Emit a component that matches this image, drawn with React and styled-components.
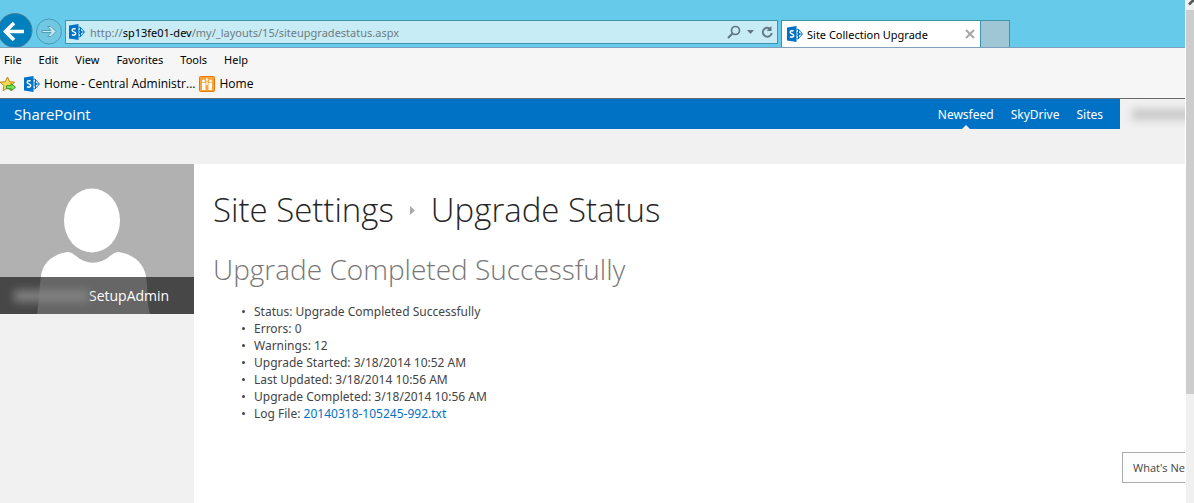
import React from "react";
import styled, { createGlobalStyle } from "styled-components";

const GlobalStyle = createGlobalStyle`
  *, *::before, *::after { box-sizing: border-box; }
  html, body { margin: 0; }
  body {
    font-family: "Noto Sans", "Open Sans", sans-serif;
    font-size: 12px;
    color: #444;
    background: #fff;
    overflow: hidden;
  }
  a { text-decoration: none; color: inherit; }
  button { font: inherit; color: inherit; background: none; border: 0; padding: 0; }
  svg { display: block; flex: none; }
`;

const Window = styled.div`
  display: flex;
  min-height: 100vh;
`;
const Viewport = styled.div`
  flex: 1;
  min-width: 0;
  display: flex;
  flex-direction: column;
  overflow: hidden;
`;
const ScrollTrack = styled.div`
  width: 9px;
  flex: none;
  background: #f0f0f0;
  border-left: 1px solid #fff;
  overflow: hidden;
`;
const ScrollThumb = styled.div`
  height: 384px;
  background: #cdcdcd;
`;

const TitleBar = styled.div`
  height: 48px;
  display: flex;
  align-items: flex-end;
  background: #66caea;
  border-bottom: 1px solid #7f9fbf;
  overflow: hidden;
`;
const NavButtons = styled.div`
  display: flex;
  align-items: flex-end;
  width: 65px;
  height: 35px;
  flex: none;
`;
const NavButton = styled.button`
  display: block;
  height: 34px;
`;
const AddressBar = styled.form`
  flex: 0 1 713px;
  height: 24px;
  margin-bottom: 3px;
  padding: 0 3px;
  display: flex;
  align-items: center;
  gap: 5px;
  border: 1px solid #4093ab;
  background: #c8ecf6;
`;
const Address = styled.div`
  flex: 1;
  font-size: 11px;
  color: #6f7b80;
  white-space: nowrap;
  b { font-weight: 400; color: #000; }
`;
const Tools = styled.div`
  display: flex;
  align-items: center;
  gap: 6px;
`;
const Tab = styled.div`
  width: 200px;
  flex: none;
  height: 27px;
  margin-left: 3px;
  padding: 0 5px;
  display: flex;
  align-items: center;
  gap: 4px;
  font-size: 11px;
  color: #000;
  background: #fff;
  border: 1px solid #4093ab;
  border-bottom: 0;
  white-space: nowrap;
`;
const TabTitle = styled.span`
  flex: 1;
`;
const NewTab = styled.button`
  width: 29px;
  height: 27px;
  && {
    background: #9fc6d4;
    border: 1px solid #4093ab;
    border-width: 1px 1px 0 0;
  }
`;

const Bars = styled.div`
  height: 51px;
  background: #f6f6f6;
  border-bottom: 1px solid #6a6a6a;
  color: #000;
  font-size: 11px;
`;
const MenuBar = styled.nav`
  height: 22px;
  padding-left: 4px;
  display: flex;
  align-items: center;
  gap: 17px;
`;
const FavoritesBar = styled.nav`
  height: 28px;
  display: flex;
  align-items: center;
  gap: 8px;
`;
const FavoriteLinks = styled.div`
  display: flex;
  gap: 4px;
`;
const Favorite = styled.a`
  display: flex;
  align-items: center;
  gap: 4px;
  font-size: 12px;
  line-height: 16px;
  font-family: "Open Sans", "Noto Sans", sans-serif;
`;

const SuiteBar = styled.header`
  height: 30px;
  display: flex;
  background: #0072c6;
  color: #fff;
`;
const Brand = styled.a`
  flex: 1;
  padding-left: 14px;
  font-family: "Open Sans", "Noto Sans", sans-serif;
  font-size: 15px;
  line-height: 31px;
`;
const SuiteNav = styled.nav`
  display: flex;
  gap: 17px;
  padding-right: 17px;
  font-size: 12px;
  line-height: 31px;
`;
const SuiteLink = styled.a`
  position: relative;
`;
const Pointer = styled.svg`
  position: absolute;
  left: calc(50% - 4px);
  bottom: 0;
`;
const Account = styled.div`
  width: 65px;
  padding: 10px 0 0 12px;
  background: #f1f1f1;
  overflow: hidden;
`;
const Redacted = styled.div`
  width: ${(p) => p.$width}px;
  height: ${(p) => p.$height}px;
  background: ${(p) => p.$color};
  filter: blur(4px);
  flex: none;
`;
const Ribbon = styled.div`
  height: 35px;
  background: #f1f1f1;
`;

const Body = styled.div`
  flex: 1;
  display: flex;
`;
const Side = styled.aside`
  width: 194px;
  flex: none;
  background: #f1f1f1;
`;
const Profile = styled.div`
  position: relative;
  height: 150px;
  background: #b1b1b1;
  overflow: hidden;
`;
const ProfileName = styled.div`
  position: absolute;
  inset: auto 0 0 0;
  height: 37px;
  padding-left: 14px;
  display: flex;
  align-items: center;
  color: #fff;
  font-family: "Open Sans", "Noto Sans", sans-serif;
  font-size: 14px;
  background: rgba(0, 0, 0, 0.6);
`;
const Main = styled.main`
  position: relative;
  flex: 1;
  min-width: 0;
  padding: 20px 0 0 19px;
  font-family: "Open Sans", "Noto Sans", sans-serif;
`;
const Title = styled.h1`
  margin: 0;
  display: flex;
  align-items: center;
  gap: 16px;
  font-size: 33px;
  line-height: 52px;
  font-weight: 300;
  color: #262626;
  white-space: nowrap;
`;
const Subtitle = styled.h2`
  margin: 12px 0 0;
  font-size: 28px;
  line-height: 42px;
  font-weight: 300;
  color: #777;
  white-space: nowrap;
`;
const Details = styled.ul`
  margin: 13px 0 0;
  padding: 0;
  list-style: none;
  font-family: "Noto Sans", "Open Sans", sans-serif;
  line-height: 17px;
`;
const Detail = styled.li`
  display: flex;
  align-items: center;
  white-space: pre;
  &::before {
    content: "";
    width: 3px;
    height: 3px;
    margin: 0 9px 0 29px;
    border-radius: 50%;
    background: #444;
  }
`;
const LogLink = styled.a`
  && { color: #0072c6; }
`;
const Callout = styled.button`
  && {
    position: absolute;
    right: -17px;
    bottom: 20px;
    width: 80px;
    height: 31px;
    padding-left: 10px;
    border: 1px solid #ababab;
    background: #fdfdfd;
    color: #444;
    font-size: 11px;
    text-align: left;
    white-space: nowrap;
  }
`;

const SharePointIcon = () => (
  <svg width="16" height="16" viewBox="0 0 16 16" aria-hidden="true">
    <path d="M9.500 3.500 11 3l4.500 5-4.500 5-1.500-.5M11.500 4v8M10 6l3 2-3 2M9.500 8H15" fill="none" stroke="#0072c6" strokeWidth="1" />
    <path d="M0 1.500 9.500 0v16L0 14.500z" fill="#0072c6" />
    <path d="M6.600 5.200C5.500 4.400 3.200 4.500 3.200 6.200c0 1.900 3.500 1.500 3.500 3.400 0 1.800-2.400 1.900-3.700 1" fill="none" stroke="#fff" strokeWidth="1.500" />
  </svg>
);

const BackIcon = () => (
  <svg width="34" height="34" viewBox="0 0 34 34" aria-hidden="true">
    <circle cx="15" cy="17.500" r="17" fill="#0080bd" stroke="#4e8194" />
    <path d="M5 18.500h19M14 10l-8.500 8.500L14 27" fill="none" stroke="#fff" strokeWidth="3.600" />
  </svg>
);

const ForwardIcon = () => (
  <svg width="28" height="34" viewBox="0 0 28 34" aria-hidden="true">
    <circle cx="15" cy="18.500" r="12.500" fill="#70c8e2" stroke="#4a9ab2" />
    <path d="M8 17.500h9l-3.500-4h3.500l5 5-5 5h-3.500l3.500-4H8z" fill="#c4ebf4" stroke="#559eb3" strokeWidth="1" />
  </svg>
);

const FavoritesIcon = () => (
  <svg width="16" height="16" viewBox="0 0 16 16" aria-hidden="true">
    <path d="M7.500 1 9.600 5.700l5 .5-3.700 3.400 1 5-4.400-2.500L3 14.600l1-5L0 6.200l5.200-.5z" fill="#fdd94f" stroke="#bf8519" />
    <path d="M6.500 9.700h4.500V7.500l4.500 3.700-4.500 3.700v-2.200H6.500z" fill="#7ee05a" stroke="#2b9a2b" />
  </svg>
);

const HomeSiteIcon = () => (
  <svg width="16" height="16" viewBox="0 0 16 16" aria-hidden="true">
    <rect x=".5" y=".5" width="15" height="15" rx="1" fill="#ffa234" stroke="#e57a0c" />
    <g fill="#fff">
      <circle cx="4.500" cy="5" r="1.500" /><circle cx="11.500" cy="5" r="1.500" /><circle cx="8" cy="3.500" r="1.200" />
      <path d="M3 7h3.500v7H3zM9.500 7H13v7H9.500zM7.300 5.500h1.400V9H7.300z" />
    </g>
  </svg>
);

const Person = () => (
  <svg width="194" height="150" viewBox="0 0 194 150" aria-hidden="true">
    <ellipse cx="92" cy="56.500" rx="28" ry="32" fill="#fff" />
    <path d="M37 150c2-10 2-24 4-38 2-15 14-22 26-24 4-.5 6 2 9 4 10 9 24 9 34 0 3-2 5-4.500 9-4 12 2 24 9 27 24 2 14 1 28 4 38z" fill="#fff" />
  </svg>
);

const MENU = ["File", "Edit", "View", "Favorites", "Tools", "Help"];
const DETAILS = [
  "Status: Upgrade Completed Successfully",
  "Errors: 0",
  "Warnings: 12",
  "Upgrade Started: 3/18/2014 10:52 AM",
  "Last Updated: 3/18/2014 10:56 AM",
  "Upgrade Completed: 3/18/2014 10:56 AM",
];

export default function App() {
  return (
    <Window>
      <GlobalStyle />
      <Viewport>
        <TitleBar>
          <NavButtons>
            <NavButton aria-label="Back"><BackIcon /></NavButton>
            <NavButton aria-label="Forward"><ForwardIcon /></NavButton>
          </NavButtons>
          <AddressBar>
            <SharePointIcon />
            <Address>http://<b>sp13fe01-dev</b>/my/_layouts/15/siteupgradestatus.aspx</Address>
            <Tools>
              <button type="button" aria-label="Search">
                <svg width="14" height="14" viewBox="0 0 14 14"><circle cx="8.500" cy="5.500" r="4" fill="none" stroke="#5f7780" strokeWidth="1.700" /><path d="M5.500 8.500 1 13" stroke="#5f7780" strokeWidth="2" /></svg>
              </button>
              <button type="button" aria-label="Show address list">
                <svg width="7" height="4" viewBox="0 0 7 4"><path d="M0 0h7L3.500 4z" fill="#5f7780" /></svg>
              </button>
              <button type="button" aria-label="Refresh">
                <svg width="14" height="14" viewBox="0 0 14 14"><path d="M10.500 4A4.500 4.500 0 1 0 11.800 8" fill="none" stroke="#5f7780" strokeWidth="1.800" /><path d="M11.500 1v5H6.500z" fill="#5f7780" /></svg>
              </button>
            </Tools>
          </AddressBar>
          <Tab>
            <SharePointIcon />
            <TabTitle>Site Collection Upgrade</TabTitle>
            <button aria-label="Close tab">
              <svg width="10" height="10" viewBox="0 0 10 10"><path d="m1 1 8 8M9 1 1 9" stroke="#a6a6a6" strokeWidth="2" /></svg>
            </button>
          </Tab>
          <NewTab aria-label="New tab" />
        </TitleBar>
        <Bars>
          <MenuBar>
            {MENU.map((m) => <button key={m}>{m}</button>)}
          </MenuBar>
          <FavoritesBar>
            <button aria-label="Add to favorites"><FavoritesIcon /></button>
            <FavoriteLinks>
              <Favorite href="#admin"><SharePointIcon />Home - Central Administr...</Favorite>
              <Favorite href="#home"><HomeSiteIcon />Home</Favorite>
            </FavoriteLinks>
          </FavoritesBar>
        </Bars>
        <SuiteBar>
          <Brand href="#sharepoint">SharePoint</Brand>
          <SuiteNav>
            <SuiteLink href="#newsfeed">
              Newsfeed
              <Pointer width="8" height="4" viewBox="0 0 8 4"><path d="M0 4 4 0l4 4z" fill="#f1f1f1" /></Pointer>
            </SuiteLink>
            <SuiteLink href="#skydrive">SkyDrive</SuiteLink>
            <SuiteLink href="#sites">Sites</SuiteLink>
          </SuiteNav>
          <Account><Redacted $width={60} $height={11} $color="#c6c6c6" /></Account>
        </SuiteBar>
        <Ribbon />
        <Body>
          <Side>
            <Profile>
              <Person />
              <ProfileName><Redacted $width={75} $height={12} $color="#808080" />SetupAdmin</ProfileName>
            </Profile>
          </Side>
          <Main>
            <Title>
              <span>Site Settings</span>
              <svg width="5" height="9" viewBox="0 0 5 9" aria-hidden="true"><path d="M0 0v9l5-4.500z" fill="#ababab" /></svg>
              <span>Upgrade Status</span>
            </Title>
            <Subtitle>Upgrade Completed Successfully</Subtitle>
            <Details>
              {DETAILS.map((d) => <Detail key={d}>{d}</Detail>)}
              <Detail>Log File: <LogLink href="#log">20140318-105245-992.txt</LogLink></Detail>
            </Details>
            <Callout>What's New</Callout>
          </Main>
        </Body>
      </Viewport>
      <ScrollTrack>
        <svg width="8" height="10" viewBox="0 0 8 10" aria-hidden="true"><path d="M3 4.500 8-.5" stroke="#555" strokeWidth="2.500" /></svg>
        <ScrollThumb />
      </ScrollTrack>
    </Window>
  );
}
